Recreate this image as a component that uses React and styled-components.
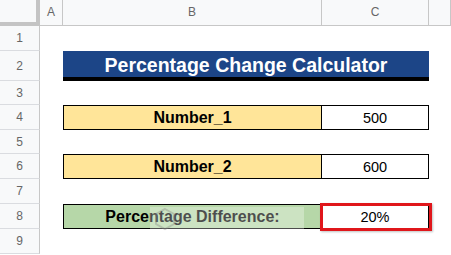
import React from "react";
import styled, { createGlobalStyle } from "styled-components";

const Global = createGlobalStyle`
  html, body { margin: 0; padding: 0; background: #fff; }
  body { font-family: "Liberation Sans", Arial, sans-serif; }
`;

const Sheet = styled.div`
  position: relative;
  display: grid;
  grid-template-columns: 40px 23px 259px 107px 1fr;
  grid-template-rows: 26px 25px 30px 24px 25px 24px 25px 25px 25px 25px;
  width: 451px;
  height: 255px;
  overflow: hidden;
  background: #fff;
`;

const Corner = styled.div`
  box-sizing: border-box;
  background: #f8f9fa;
  border-right: 4px solid #c4c4c4;
  border-bottom: 4px solid #c4c4c4;
`;

const ColHeader = styled.div`
  box-sizing: border-box;
  background: #f8f9fa;
  border-right: 1px solid #c7c7c7;
  border-bottom: 1px solid #c7c7c7;
  display: flex;
  align-items: center;
  justify-content: center;
  color: #666;
  font-size: 12px;
  padding-bottom: 1px;
`;

const RowHeader = styled.div`
  box-sizing: border-box;
  background: #f8f9fa;
  border-right: 1px solid #c7c7c7;
  border-bottom: 1px solid #dadce0;
  display: flex;
  align-items: center;
  justify-content: center;
  color: #666;
  font-size: 12px;
`;

const Blank = styled.div``;

const Title = styled.div`
  grid-column: span 2;
  box-sizing: border-box;
  background: #1c4587;
  border-bottom: 4px solid #000;
  color: #fff;
  font-weight: bold;
  font-size: 19.5px;
  display: flex;
  align-items: center;
  justify-content: center;
  padding-top: 2px;
`;

const Label = styled.div`
  box-sizing: border-box;
  background: ${(p) => p.$bg};
  border: 1px solid #000;
  display: flex;
  align-items: center;
  justify-content: center;
  font-weight: bold;
  font-size: 16px;
  color: #000;
`;

const Value = styled.div`
  position: relative;
  box-sizing: border-box;
  background: #fff;
  border: 1px solid #000;
  border-left: none;
  display: flex;
  align-items: center;
  justify-content: center;
  font-size: 14.5px;
  color: #000;
`;

const Highlight = styled.div`
  position: absolute;
  left: -2px;
  top: -2px;
  right: -4px;
  bottom: -3px;
  border: 3px solid #e0161b;
  box-shadow: 1px 1px 2px rgba(0, 0, 0, 0.25);
  pointer-events: none;
`;

const Watermark = styled.div`
  position: absolute;
  left: 150px;
  top: 207px;
  width: 150px;
  height: 24px;
  background: rgba(255, 255, 255, 0.3);
  display: flex;
  align-items: center;
  padding-left: 4px;
  pointer-events: none;
`;

export default function App() {
  return (
    <>
      <Global />
      <Sheet>
        <Corner />
        <ColHeader>A</ColHeader>
        <ColHeader>B</ColHeader>
        <ColHeader>C</ColHeader>
        <ColHeader />

        <RowHeader>1</RowHeader>
        <Blank /><Blank /><Blank /><Blank />

        <RowHeader>2</RowHeader>
        <Blank />
        <Title>Percentage Change Calculator</Title>
        <Blank />

        <RowHeader>3</RowHeader>
        <Blank /><Blank /><Blank /><Blank />

        <RowHeader>4</RowHeader>
        <Blank />
        <Label $bg="#ffe599">Number_1</Label>
        <Value>500</Value>
        <Blank />

        <RowHeader>5</RowHeader>
        <Blank /><Blank /><Blank /><Blank />

        <RowHeader>6</RowHeader>
        <Blank />
        <Label $bg="#ffe599">Number_2</Label>
        <Value>600</Value>
        <Blank />

        <RowHeader>7</RowHeader>
        <Blank /><Blank /><Blank /><Blank />

        <RowHeader>8</RowHeader>
        <Blank />
        <Label $bg="#b6d7a8">Percentage Difference:</Label>
        <Value>
          20%
          <Highlight />
        </Value>
        <Blank />

        <RowHeader>9</RowHeader>
        <Blank /><Blank /><Blank /><Blank />

        <Watermark>
          <svg width="22" height="24" viewBox="0 0 22 24">
            <polygon points="11,2 20,7 20,17 11,22 2,17 2,7" fill="none" stroke="rgba(130,130,130,0.35)" strokeWidth="2" />
          </svg>
        </Watermark>
      </Sheet>
    </>
  );
}
